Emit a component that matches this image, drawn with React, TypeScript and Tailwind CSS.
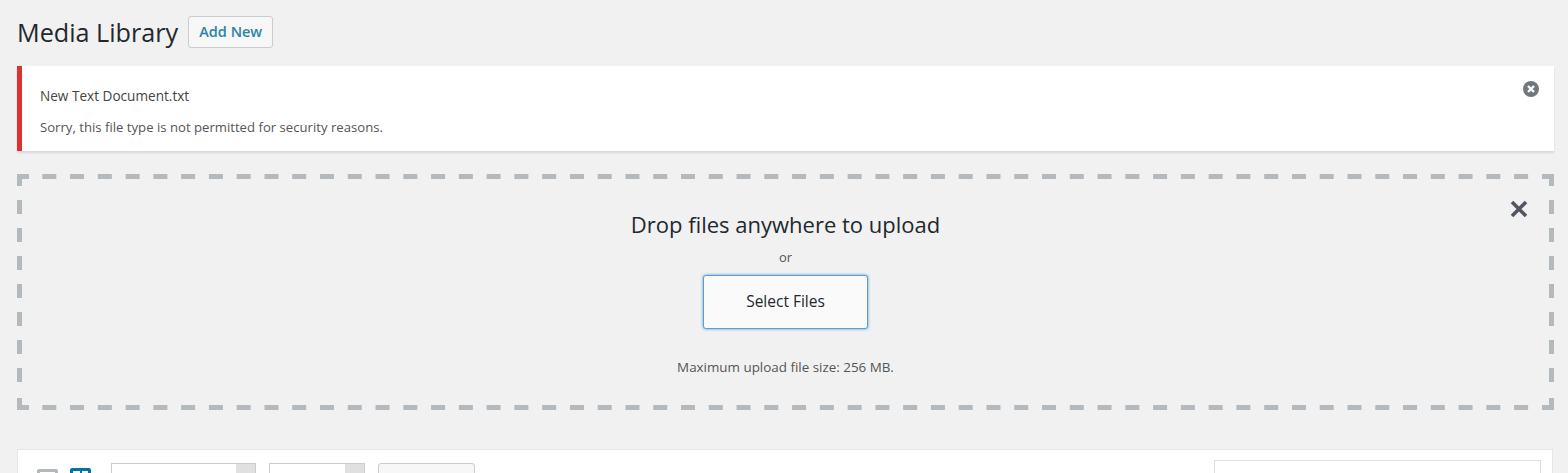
export default function App() {
    return (
        <div className="h-[473px] overflow-hidden bg-[#f1f1f1] pl-[17px] pr-[14px] font-['Open_Sans',sans-serif] text-[#444]">
            {/* Heading */}
            <div className="flex h-[66px] items-start">
                <h1 className="mt-[13px] text-[25.2px] leading-[38px] text-[#23282d]">Media Library</h1>
                <button className="mt-[16px] ml-[10px] h-[32px] w-[85px] rounded-[3px] border border-[#ccc] bg-[#f7f7f7] text-[14.5px] font-semibold text-[#2a83ad]">
                    Add New
                </button>
            </div>

            {/* Error notice */}
            <div className="relative h-[85px] border-l-[5px] border-[#dc3232] bg-white pl-[18px] shadow-[0_2px_2px_rgba(0,0,0,0.1)]">
                <p className="pt-[21px] text-[13.6px] leading-[18px] font-medium text-[#444]">New Text Document.txt</p>
                <p className="pt-[13px] text-[13.15px] leading-[18px] text-[#555]">Sorry, this file type is not permitted for security reasons.</p>
                <button className="absolute top-[15px] right-[15px]">
                    <svg width="16" height="16" viewBox="0 0 16 16">
                        <circle cx="8" cy="8" r="8" fill="#72777c" />
                        <path d="M5 5l6 6M11 5l-6 6" stroke="#fff" strokeWidth="2.4" />
                    </svg>
                </button>
            </div>

            {/* Upload drop area */}
            <div className="relative mt-[23px] flex h-[236px] w-[1537px] flex-col items-center">
                <svg className="absolute inset-0" width="1537" height="236" fill="none" stroke="#b4b9be" strokeWidth="5">
                    <path d="M2.5 12V2.5H12" />
                    <path d="M1525 2.5H1534.5V12" />
                    <path d="M1534.5 224V233.5H1525" />
                    <path d="M12 233.5H2.5V224" />
                    <path d="M25.3 2.5H1512" strokeDasharray="14 13.77" />
                    <path d="M25.3 233.5H1512" strokeDasharray="14 13.77" />
                    <path d="M2.5 26V208" strokeDasharray="14 14" />
                    <path d="M1534.5 26V208" strokeDasharray="14 14" />
                </svg>
                <button className="absolute top-[26px] right-[26px]">
                    <svg width="18" height="18" viewBox="0 0 18 18">
                        <path d="M2 2l14 14M16 2L2 16" stroke="#50575e" strokeWidth="3.6" />
                    </svg>
                </button>
                <h2 className="mt-[32px] text-[22px] leading-[36px] text-[#23282d]">Drop files anywhere to upload</h2>
                <p className="mt-[6px] text-[13px] leading-[18px] text-[#555]">or</p>
                <button className="mt-[9px] h-[54px] w-[165px] rounded-[3px] border border-[#5b9dd9] bg-[#fafafa] text-[15.5px] text-[#23282d] shadow-[0_0_3px_rgba(0,115,170,0.7)]">
                    Select Files
                </button>
                <p className="mt-[29px] text-[13.4px] leading-[18px] text-[#555]">Maximum upload file size: 256 MB.</p>
            </div>

            {/* Media toolbar */}
            <div className="mt-[39px] h-[60px] w-[1536px] border border-[#e5e5e5] bg-white">
                <div className="flex items-start pt-[13px] pl-[19px]">
                    <span className="mt-[6px] h-[22px] w-[21px] rounded-[2px] border-[3px] border-[#b4b9be]" />
                    <span className="mt-[5px] ml-[12px] grid h-[22px] w-[21px] grid-cols-2 gap-[2px] rounded-[2px] border-[3px] border-[#0073aa] bg-[#0073aa]">
                        <span className="bg-white" />
                        <span className="bg-white" />
                    </span>
                    <div className="ml-[20px] flex h-[32px] w-[145px] justify-end border border-[#ccc]">
                        <span className="w-[19px] bg-[#e0e0e0]" />
                    </div>
                    <div className="ml-[13px] flex h-[32px] w-[96px] justify-end border border-[#ccc]">
                        <span className="w-[19px] bg-[#e0e0e0]" />
                    </div>
                    <button className="ml-[13px] h-[32px] w-[97px] rounded-[3px] border border-[#ccc] bg-[#f7f7f7]" />
                    <div className="mt-[-3px] ml-auto mr-[11px] h-[32px] w-[327px] border border-[#ddd] bg-white" />
                </div>
            </div>
        </div>
    );
}
